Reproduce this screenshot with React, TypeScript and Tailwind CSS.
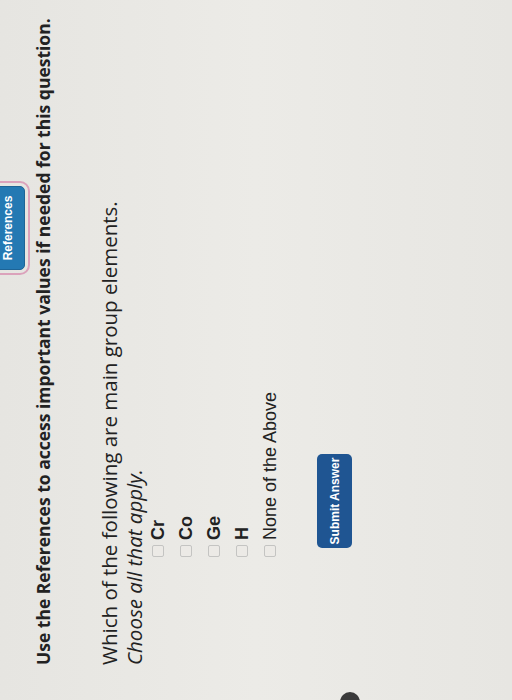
import React from 'react';

const options = [
  { label: 'Cr', bold: true },
  { label: 'Co', bold: true },
  { label: 'Ge', bold: true },
  { label: 'H', bold: true },
  { label: 'None of the Above', bold: false },
];

const App: React.FC = () => {
  return (
    <div className="relative w-[512px] h-[700px] overflow-hidden bg-[#e9e8e4]">
      {/* the photo is turned a quarter turn, so the page is laid out flat and rotated */}
      <div className="absolute left-0 top-0 w-[700px] h-[512px] origin-top-left [transform:translateY(700px)_rotate(-90deg)] bg-gradient-to-b from-[#e6e5e1] via-[#ecebe7] to-[#e7e6e2] text-[#222]">
        <div className="flex flex-col">
          <div className="ml-[430px] mt-[-10px] w-[84px] h-[35px] rounded-[5px] bg-[#2479b3] border border-[#1d6496] flex items-center justify-center outline-2 outline-offset-[3px] outline-[#dba2bb]">
            <span className="text-[12px] font-bold text-white font-['Liberation_Sans',Arial,sans-serif] leading-none">References</span>
          </div>

          <p className="ml-[35px] mt-[8px] h-[20px] leading-[20px] text-[17.5px] font-bold font-['Open_Sans',sans-serif] whitespace-nowrap">
            Use the References to access important values if needed for this question.
          </p>

          <div className="ml-[35px] mt-[44px] font-['Open_Sans',sans-serif] text-[20.5px] leading-[25px]">
            <p className="whitespace-nowrap">Which of the following are main group elements.</p>
            <p className="italic whitespace-nowrap">Choose all that apply.</p>
          </div>

          <div className="ml-[143px] mt-[-3px] flex flex-col font-['Liberation_Sans',Arial,sans-serif]">
            {options.map((o) => (
              <label key={o.label} className="h-[28px] flex items-center gap-[5px]">
                <span className="w-[12px] h-[12px] rounded-[2px] border border-[#c4c4c2] bg-[#eceae6]" />
                <span className={`text-[18px] leading-none ${o.bold ? 'font-bold' : 'font-normal'}`}>{o.label}</span>
              </label>
            ))}
          </div>

          <button className="ml-[152px] mt-[33px] w-[94px] h-[35px] rounded-[5px] bg-[#1f5592] text-white text-[12px] font-bold font-['Liberation_Sans',Arial,sans-serif] flex items-center justify-center">
            Submit Answer
          </button>
        </div>

        <div className="absolute left-[-12px] top-[340px] w-[20px] h-[20px] rounded-full bg-[#3a3a3a]" />
      </div>
    </div>
  );
};

export default App;
